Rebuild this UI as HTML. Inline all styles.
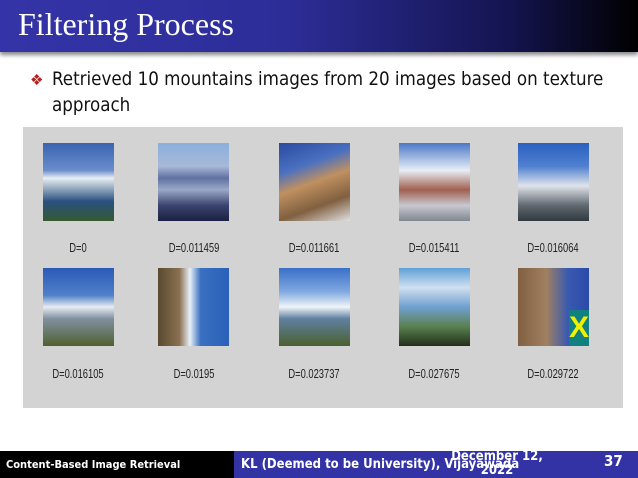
<!DOCTYPE html><html><head><style>
body{margin:0;width:638px;height:478px;position:relative;overflow:hidden;background:#fff;font-family:"Liberation Sans",sans-serif}
.title{position:absolute;left:0;top:0;width:638px;height:52px;background:linear-gradient(90deg,#3434a8 0%,#2d2d98 45%,#141450 80%,#000 100%);box-shadow:0 3px 4px #888}
.title span{position:absolute;left:18px;top:6px;font:32px "Liberation Serif",serif;color:#fff}
.bul{position:absolute;left:30px;top:71px;color:#b02020;font-size:15px}
.txt{position:absolute;left:52px;top:67px;width:585px;font:18.6px "DejaVu Sans Condensed","Liberation Sans",sans-serif;color:#111;line-height:26px}
.panel{position:absolute;left:23px;top:127px;width:600px;height:281px;background:#d3d3d3}
.im{position:absolute;width:71px;height:78px}
.lb{position:absolute;width:110px;text-align:center;font:13px "Liberation Sans",sans-serif;color:#222;transform:scaleX(.72)}
.foot{position:absolute;left:0;top:451px;width:638px;height:27px;background:#3333a5}
.fl{position:absolute;left:0;top:451px;width:234px;height:27px;background:#000}
.ft{position:absolute;color:#fff;font:bold 12px "DejaVu Sans Condensed","Liberation Sans",sans-serif}
</style></head><body>
<div class="title"><span>Filtering Process</span></div>
<div class="bul">❖</div>
<div class="txt">Retrieved 10 mountains images from 20 images based on texture approach</div>
<div class="panel"></div>
<div class="im" style="left:43px;top:143px;background:linear-gradient(180deg,#3a64b0 0%,#6a8ccc 35%,#e8eef4 45%,#8aa0b8 60%,#2a5080 75%,#355a30 100%)"></div>
<div class="im" style="left:158px;top:143px;background:linear-gradient(180deg,#8ab0dc 0%,#a8b8d8 30%,#6070a0 45%,#9aa8c8 60%,#3a4470 80%,#1a2040 100%)"></div>
<div class="im" style="left:279px;top:143px;background:linear-gradient(160deg,#2a4aa0 0%,#4a70c0 30%,#c09060 50%,#806040 75%,#e0e0e0 100%)"></div>
<div class="im" style="left:399px;top:143px;background:linear-gradient(180deg,#4a78c8 0%,#e8eef6 35%,#a06050 60%,#c8c8d0 80%,#808890 100%)"></div>
<div class="im" style="left:518px;top:143px;background:linear-gradient(180deg,#2a60c0 0%,#5080d0 30%,#e0e4ea 55%,#606870 80%,#303840 100%)"></div>
<div class="im" style="left:43px;top:268px;background:linear-gradient(180deg,#2a5ab8 0%,#5080c8 35%,#e8ecf2 50%,#8090a0 65%,#506030 100%)"></div>
<div class="im" style="left:158px;top:268px;background:linear-gradient(90deg,#5a4a30 0%,#8a7050 30%,#e8f0f8 45%,#3a70c0 60%,#2a60b8 100%)"></div>
<div class="im" style="left:279px;top:268px;background:linear-gradient(180deg,#3a70c8 0%,#80a8e0 30%,#f0f4f8 50%,#6080a0 65%,#4a6030 100%)"></div>
<div class="im" style="left:399px;top:268px;background:linear-gradient(180deg,#60a0d8 0%,#d0e0f0 25%,#70a0d0 50%,#5a8050 75%,#203018 100%)"></div>
<div class="im" style="left:518px;top:268px;background:linear-gradient(90deg,#806040 0%,#a08060 40%,#3a5ab0 70%,#2a4aa8 100%)"><div style="position:absolute;right:0;top:42px;width:20px;height:36px;background:#108080;color:#f0f000;font:bold 30px 'Liberation Sans';text-align:center;line-height:36px">X</div></div>
<div class="lb" style="left:23px;top:240px">D=0</div>
<div class="lb" style="left:139px;top:240px">D=0.011459</div>
<div class="lb" style="left:259px;top:240px">D=0.011661</div>
<div class="lb" style="left:379px;top:240px">D=0.015411</div>
<div class="lb" style="left:498px;top:240px">D=0.016064</div>
<div class="lb" style="left:23px;top:366px">D=0.016105</div>
<div class="lb" style="left:139px;top:366px">D=0.0195</div>
<div class="lb" style="left:259px;top:366px">D=0.023737</div>
<div class="lb" style="left:379px;top:366px">D=0.027675</div>
<div class="lb" style="left:498px;top:366px">D=0.029722</div>
<div class="foot"></div><div class="fl"></div>
<div class="ft" style="left:6px;top:458px;font-size:11px">Content-Based Image Retrieval</div>
<div class="ft" style="left:241px;top:457px;font-size:13px">KL (Deemed to be University), Vijayawada</div>
<div class="ft" style="left:437px;top:450px;font-size:13px;line-height:14px;width:120px;text-align:center">December 12,<br>2022</div>
<div class="ft" style="left:604px;top:452px;font-size:15px">37</div>
</body></html>
